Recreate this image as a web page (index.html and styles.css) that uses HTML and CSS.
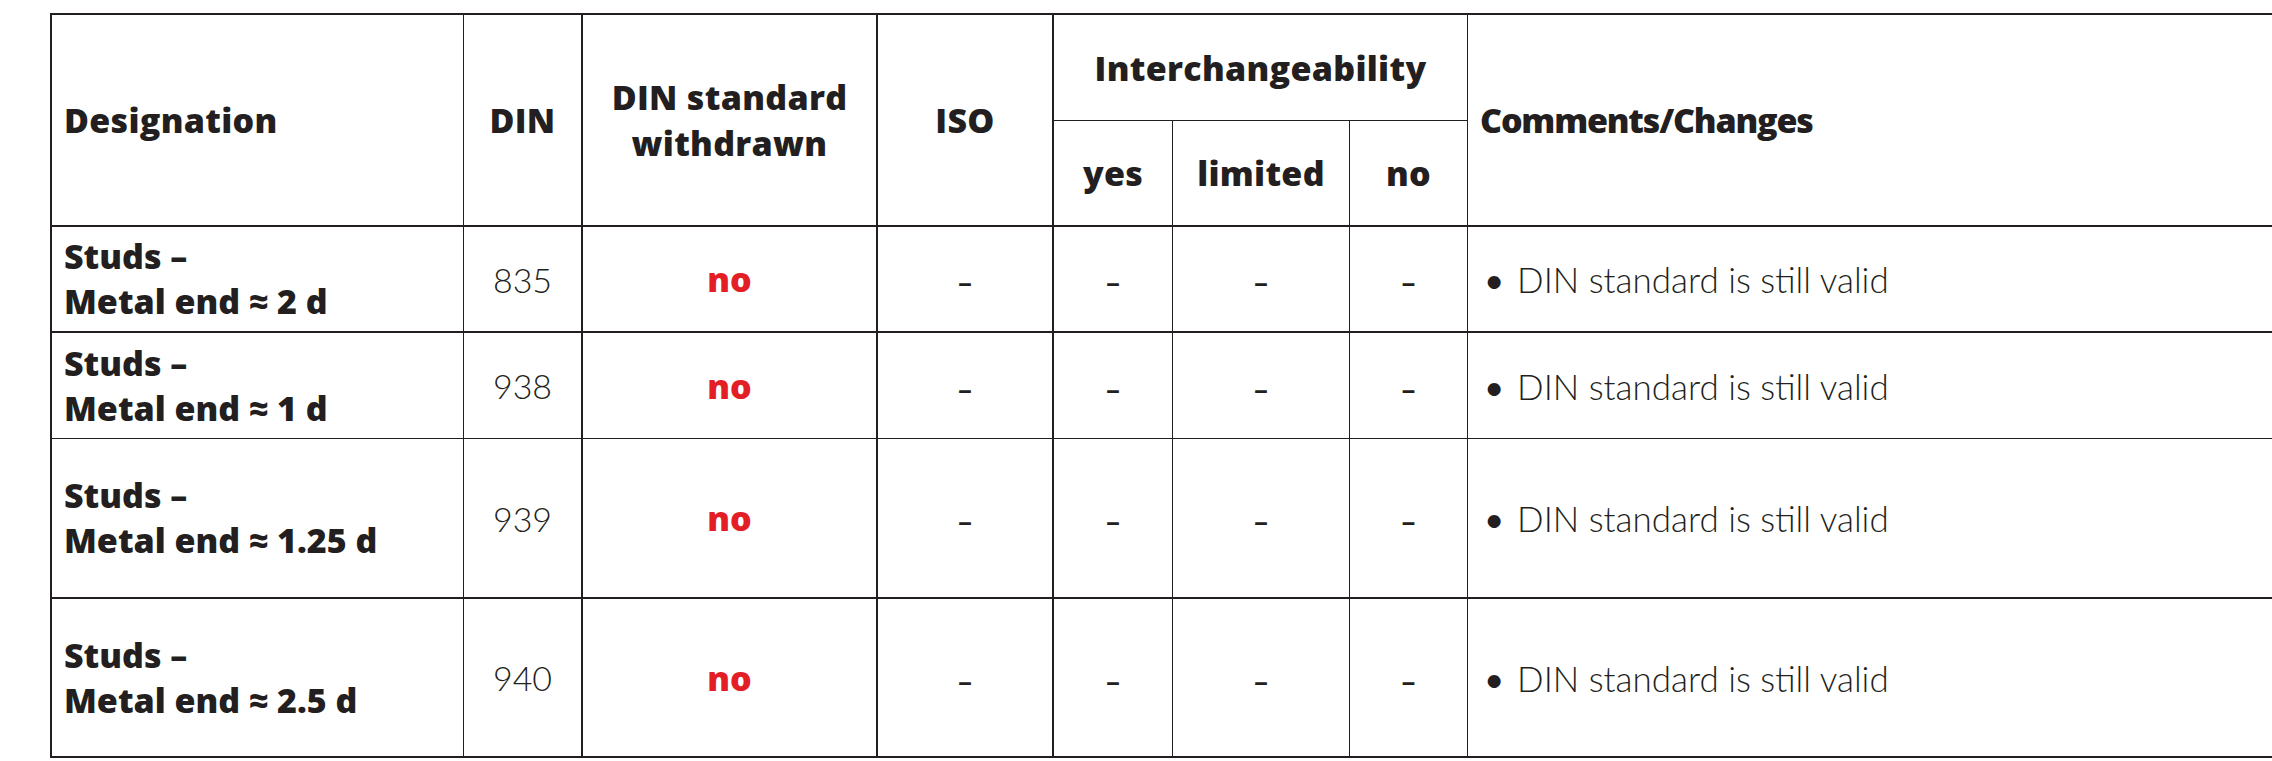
FILE: index.html
```html
<!DOCTYPE html>
<html lang="en">
<head>
<meta charset="utf-8">
<title>Studs – DIN / ISO</title>
<link rel="stylesheet" href="styles.css">
</head>
<body>
<div class="sheet">
  <table class="std">
    <colgroup>
      <col class="c-des">
      <col class="c-din">
      <col class="c-wd">
      <col class="c-iso">
      <col class="c-yes">
      <col class="c-lim">
      <col class="c-no">
      <col class="c-com">
    </colgroup>
    <thead>
      <tr class="h1">
        <th rowspan="2" class="left b-r1">Designation</th>
        <th rowspan="2" class="b-r2">DIN</th>
        <th rowspan="2" class="b-r2">DIN standard<br>withdrawn</th>
        <th rowspan="2" class="b-r2">ISO</th>
        <th colspan="3" class="b-r1 sub">Interchangeability</th>
        <th rowspan="2" class="left com-h">Comments/Changes</th>
      </tr>
      <tr class="h2">
        <th class="b-r1">yes</th>
        <th class="b-r1">limited</th>
        <th class="b-r1">no</th>
      </tr>
    </thead>
    <tbody>
      <tr class="r-a thick">
        <td class="des b-r1">Studs –<br>Metal end ≈ 2 d</td>
        <td class="num b-r2">835</td>
        <td class="red b-r2">no</td>
        <td class="dash b-r2">–</td>
        <td class="dash b-r1">–</td>
        <td class="dash b-r1">–</td>
        <td class="dash b-r1">–</td>
        <td class="com"><span class="bullet">•</span>DIN standard is still valid</td>
      </tr>
      <tr class="r-a thin">
        <td class="des b-r1">Studs –<br>Metal end ≈ 1 d</td>
        <td class="num b-r2">938</td>
        <td class="red b-r2">no</td>
        <td class="dash b-r2">–</td>
        <td class="dash b-r1">–</td>
        <td class="dash b-r1">–</td>
        <td class="dash b-r1">–</td>
        <td class="com"><span class="bullet">•</span>DIN standard is still valid</td>
      </tr>
      <tr class="r-b thick">
        <td class="des b-r1">Studs –<br>Metal end ≈ 1.25 d</td>
        <td class="num b-r2">939</td>
        <td class="red b-r2">no</td>
        <td class="dash b-r2">–</td>
        <td class="dash b-r1">–</td>
        <td class="dash b-r1">–</td>
        <td class="dash b-r1">–</td>
        <td class="com"><span class="bullet">•</span>DIN standard is still valid</td>
      </tr>
      <tr class="r-c thick">
        <td class="des b-r1">Studs –<br>Metal end ≈ 2.5 d</td>
        <td class="num b-r2">940</td>
        <td class="red b-r2">no</td>
        <td class="dash b-r2">–</td>
        <td class="dash b-r1">–</td>
        <td class="dash b-r1">–</td>
        <td class="dash b-r1">–</td>
        <td class="com"><span class="bullet">•</span>DIN standard is still valid</td>
      </tr>
    </tbody>
  </table>
</div>
</body>
</html>
```
FILE: styles.css
```css
html, body {
  margin: 0;
  padding: 0;
  background: #ffffff;
}

.sheet {
  width: 2272px;
  height: 761px;
  overflow: hidden;
  padding: 13px 0 0 50px;
  box-sizing: border-box;
}

.std {
  table-layout: fixed;
  width: 2420px;
  border-collapse: separate;
  border-spacing: 0;
  border-top: 2px solid #231f20;
  border-left: 2px solid #231f20;
  color: #231f20;
  font-family: "Lato", "Liberation Sans", sans-serif;
}

.c-des { width: 412px; }
.c-din { width: 119px; }
.c-wd  { width: 295px; }
.c-iso { width: 176px; }
.c-yes { width: 119px; }
.c-lim { width: 177px; }
.c-no  { width: 118px; }
.c-com { width: 1004px; }

th, td {
  padding: 0 12px;
  vertical-align: middle;
  text-align: center;
  box-sizing: border-box;
}

th {
  font-family: "Open Sans", "Lato", sans-serif;
  font-weight: 800;
  font-size: 34px;
  line-height: 46px;
  letter-spacing: 0.3px;
  border-bottom: 2px solid #231f20;
}

th.com-h { letter-spacing: -1.2px; }

.left { text-align: left; }

.b-r1 { border-right: 1px solid #231f20; }
.b-r2 { border-right: 2px solid #231f20; }

.h1 { height: 106px; }
.h2 { height: 106px; }

th.sub { border-bottom: 1px solid #231f20; }

.r-a { height: 106px; }
.r-b { height: 160px; }
.r-c { height: 159px; }

.thick td { border-bottom: 2px solid #231f20; }
.thin td { border-bottom: 1px solid #231f20; }

.des {
  text-align: left;
  font-family: "Open Sans", "Lato", sans-serif;
  font-weight: 800;
  font-size: 34px;
  line-height: 45px;
}

.num {
  font-weight: 300;
  font-size: 34px;
}

.red {
  color: #e31e24;
  font-family: "Open Sans", "Lato", sans-serif;
  font-weight: 800;
  font-size: 34px;
}

.dash {
  font-family: "Open Sans", "Lato", sans-serif;
  font-weight: 600;
  font-size: 28px;
  padding-top: 4px;
}

.com {
  text-align: left;
  font-weight: 300;
  font-size: 35px;
}

.bullet {
  display: inline-block;
  width: 33px;
  margin-left: 4px;
  font-weight: 400;
}
```
